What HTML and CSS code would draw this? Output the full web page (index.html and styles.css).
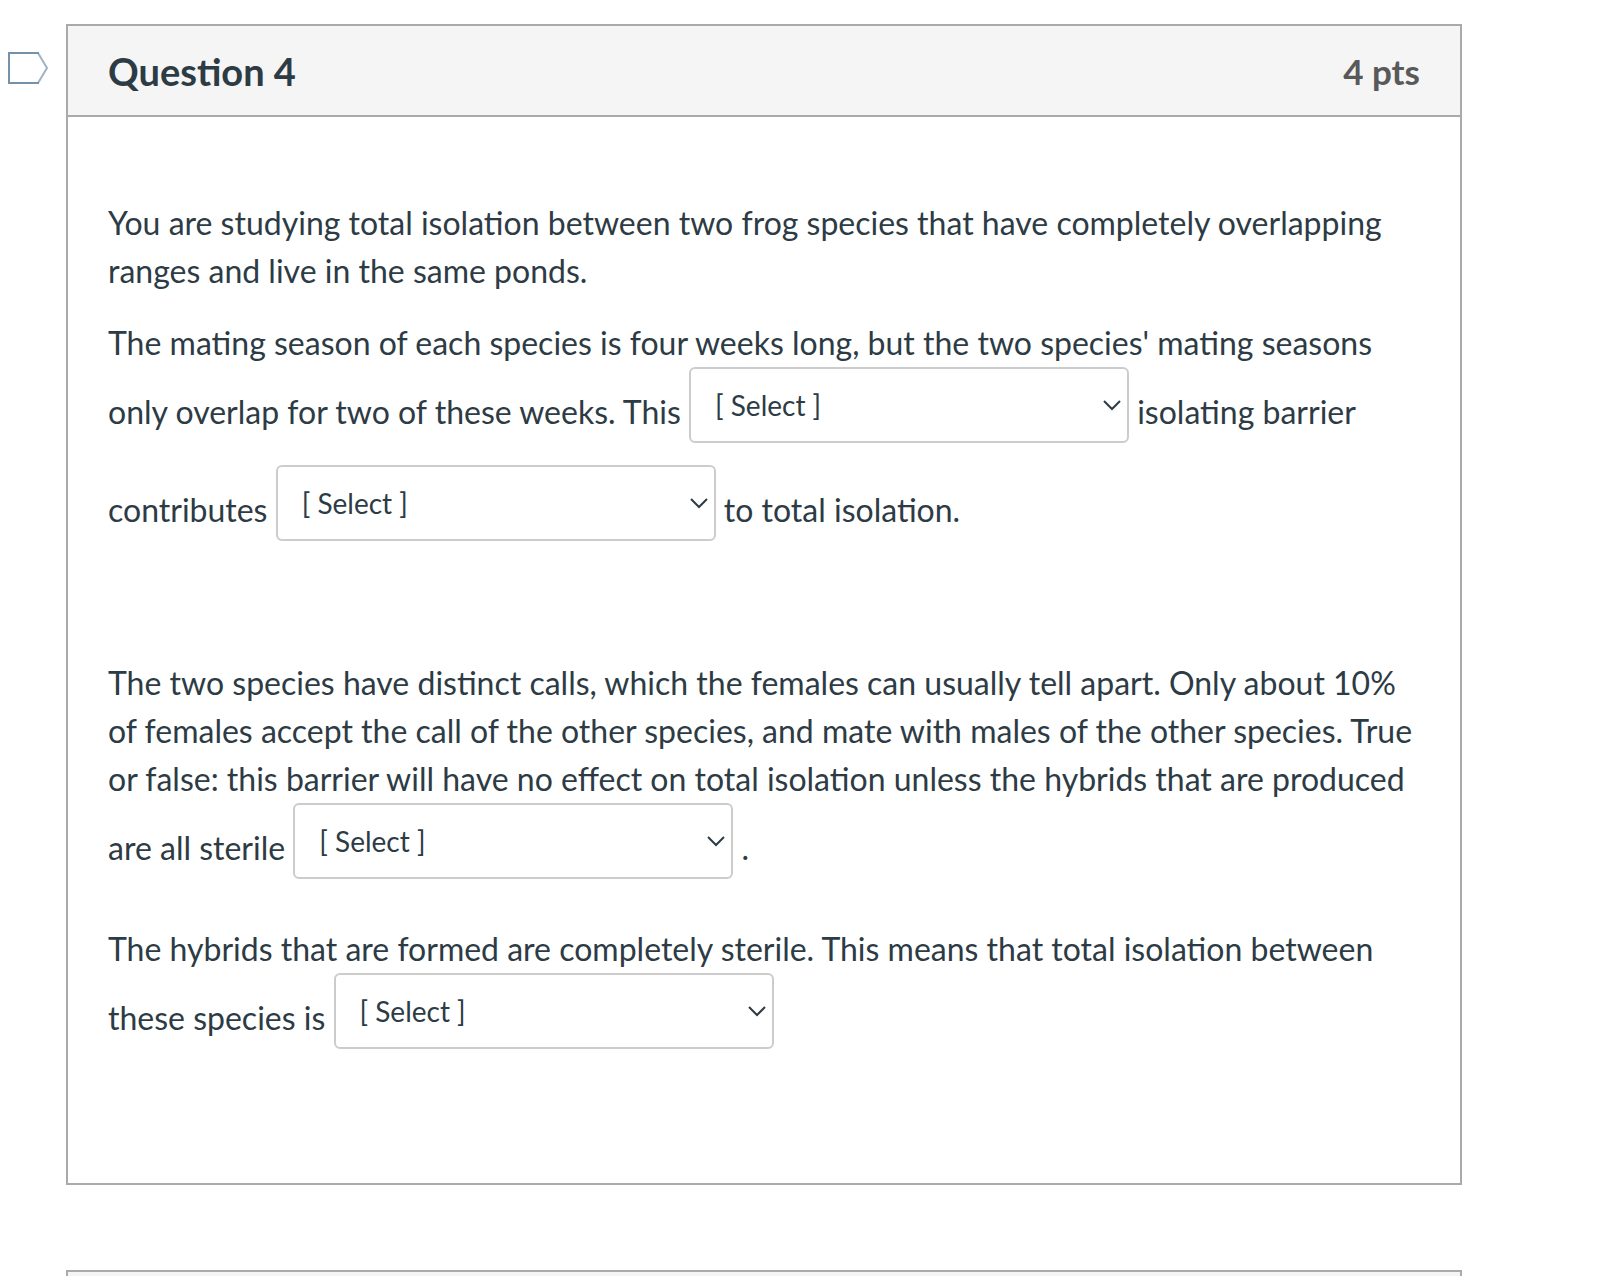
FILE: index.html
```
<!DOCTYPE html>
<html lang="en">
<head>
    <title>Question 4</title>
    <meta charset="utf-8">

    <link rel="stylesheet" href="styles.css">

</head>
<body>
<main class="questions">
    <div class="row">
        <button type="button" class="flag" aria-label="Flag question">
            <svg width="40" height="32" viewBox="0 0 40 32">
                <path d="M1 1H30L39 16L30 31H1Z" fill="none" stroke="#9db3c5" stroke-width="2"/>
                <path d="M31 1H1V31H31" fill="none" stroke="#7592aa" stroke-width="2"/>
            </svg>
        </button>
        <section class="question">
            <header class="header">
                <h2 class="name">Question 4</h2>
                <span class="points">4 pts</span>
            </header>
            <div class="text">
                <p>You are studying total isolation between two frog species that have completely overlapping ranges and live in the same ponds.</p>
                <p>
                    The mating season of each species is four weeks long, but the two species' mating seasons only overlap for two of these weeks. This
                    <select class="blank" name="barrier" aria-label="isolating barrier"><option>[ Select ]</option></select>
                    isolating barrier contributes
                    <select class="blank" name="contribution" aria-label="contribution"><option>[ Select ]</option></select>
                    to total isolation.
                </p>
                <p>&nbsp;</p>
                <p>
                    The two species have distinct calls, which the females can usually tell apart. Only about 10% of females accept the call of the other species, and mate with males of the other species. True or false: this barrier will have no effect on total isolation unless the hybrids that are produced are all sterile
                    <select class="blank" name="sterile" aria-label="true or false"><option>[ Select ]</option></select>
                    .
                </p>
                <p>
                    The hybrids that are formed are completely sterile. This means that total isolation between these species is
                    <select class="blank" name="total" aria-label="total isolation"><option>[ Select ]</option></select>
                </p>
            </div>
        </section>
    </div>
    <div class="row">
        <section class="question">
            <header class="header"></header>
        </section>
    </div>
</main>
</body>
</html>
```
FILE: styles.css
```
html,body{
    padding: 0;
    margin: 0;
    font-family: Lato, "Liberation Sans", sans-serif;
    font-size: 32px;
    line-height: 48px;
    color: #2d3b45;
    background: #fff;
}

/* the next question carries on below the fold */
body{
    height: 100vh;
    overflow: hidden;
}

.questions{
    padding: 24px 144px 0 8px;
}

.row{
    display: grid;
    grid-template-columns: 40px 1fr;
    column-gap: 18px;
    align-items: start;
    margin-bottom: 85px;
}

.flag{
    display: block;
    margin: 28px 0 0;
    padding: 0;
    border: 0;
    background: none;
    cursor: pointer;
}

.flag svg{
    display: block;
}

.question{
    grid-column: 2;
    border: 2px solid #aaa;
}

.header{
    display: flex;
    justify-content: space-between;
    align-items: center;
    min-height: 89px;
    padding: 0 40px;
    border-bottom: 2px solid #aaa;
    background: #f5f5f5;
}

.name{
    margin: 0;
    font-size: 38px;
    font-weight: bold;
}

.points{
    font-size: 35px;
    font-weight: bold;
    color: #595959;
}

.text{
    padding: 82px 40px 88px;
}

.text p{
    margin: 0 0 24px;
}

.blank{
    appearance: none;
    box-sizing: border-box;
    width: 440px;
    height: 76px;
    margin: 0 0 22px;
    padding: 0 40px 0 24px;
    border: 2px solid #ccc;
    border-radius: 6px;
    font-family: inherit;
    font-size: 28px;
    line-height: 40px;
    color: #2d3b45;
    vertical-align: middle;
    background: #fff url("data:image/svg+xml,%3Csvg xmlns='http://www.w3.org/2000/svg' width='18' height='12'%3E%3Cpath d='M1 2L9 10L17 2' fill='none' stroke='%232d3b45' stroke-width='2'/%3E%3C/svg%3E") no-repeat right 6px center;
}
```
